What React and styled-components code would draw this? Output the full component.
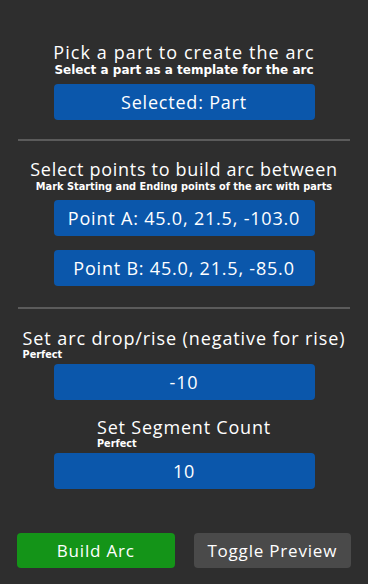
import React from "react";
import styled, { createGlobalStyle } from "styled-components";

const Global = createGlobalStyle`
  html, body { margin: 0; padding: 0; background: #2e2e2e; }
  * { box-sizing: border-box; }
`;

const Page = styled.div`
  width: 368px;
  height: 584px;
  background: #2e2e2e;
  color: #ffffff;
  display: flex;
  flex-direction: column;
  padding: 42px 17px 16px;
  font-family: "Open Sans", "Liberation Sans", sans-serif;
`;

const Section = styled.div`
  display: flex;
  flex-direction: column;
  align-items: center;
`;

const Heading = styled.div`
  display: flex;
  flex-direction: column;
  align-items: ${(p) => (p.$left ? "flex-start" : "center")};
  margin-top: ${(p) => p.$mt || 0}px;
`;

const Title = styled.div`
  font-size: 18px;
  line-height: 20px;
  letter-spacing: ${(p) => p.$ls || 0.9}px;
  white-space: nowrap;
`;

const Sub = styled.div`
  font-family: "DejaVu Sans", "Liberation Sans", sans-serif;
  font-weight: 700;
  font-size: ${(p) => p.$size || 12}px;
  line-height: ${(p) => p.$lh || 12}px;
  margin-top: ${(p) => p.$mt || 0}px;
  white-space: nowrap;
`;

const Field = styled.div`
  width: 261px;
  height: 36px;
  margin-top: ${(p) => p.$mt || 0}px;
  border-radius: 4px;
  background: #0b57ab;
  display: flex;
  align-items: center;
  justify-content: center;
  font-size: 18px;
  letter-spacing: 0.8px;
`;

const Divider = styled.div`
  height: 2px;
  background: #5b5b5b;
  margin: ${(p) => p.$mt}px 1px 0;
`;

const Spacer = styled.div`
  flex: 1;
`;

const Footer = styled.div`
  display: flex;
  gap: 19px;
`;

const ActionButton = styled.button`
  flex: 1;
  height: 35px;
  border: none;
  border-radius: 4px;
  background: ${(p) => (p.$primary ? "#149418" : "#4a4a4a")};
  color: #ffffff;
  font-family: "Open Sans", "Liberation Sans", sans-serif;
  font-size: 17px;
  letter-spacing: 0.8px;
  padding: 0;
`;

export default function App() {
  return (
    <>
      <Global />
      <Page>
        <Section>
          <Heading>
            <Title $ls={1.1}>Pick a part to create the arc</Title>
            <Sub $mt={2}>Select a part as a template for the arc</Sub>
          </Heading>
          <Field $mt={8}>Selected: Part</Field>
        </Section>
        <Divider $mt={19} />
        <Section>
          <Heading $mt={18}>
            <Title $ls={0.7}>Select points to build arc between</Title>
            <Sub $size={9.8} $mt={2}>Mark Starting and Ending points of the arc with parts</Sub>
          </Heading>
          <Field $mt={7}>Point A: 45.0, 21.5, -103.0</Field>
          <Field $mt={14}>Point B: 45.0, 21.5, -85.0</Field>
        </Section>
        <Divider $mt={21} />
        <Section>
          <Heading $left $mt={19}>
            <Title $ls={0.9}>Set arc drop/rise (negative for rise)</Title>
            <Sub $size={9.7} $lh={10} $mt={2}>Perfect</Sub>
          </Heading>
          <Field $mt={4}>-10</Field>
          <Heading $left $mt={17}>
            <Title $ls={0.8}>Set Segment Count</Title>
            <Sub $size={9.7} $lh={10} $mt={2}>Perfect</Sub>
          </Heading>
          <Field $mt={4}>10</Field>
        </Section>
        <Spacer />
        <Footer>
          <ActionButton $primary>Build Arc</ActionButton>
          <ActionButton>Toggle Preview</ActionButton>
        </Footer>
      </Page>
    </>
  );
}
